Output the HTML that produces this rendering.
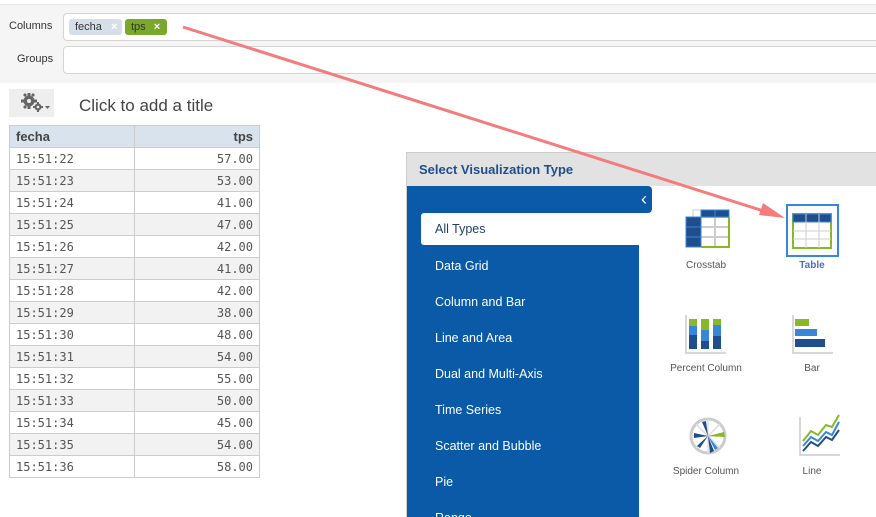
<!DOCTYPE html>
<html style="width:876px;height:517px;overflow:hidden"><head><meta charset="utf-8"><style>
*{box-sizing:border-box;margin:0;padding:0}
html{overflow:hidden}
body{width:876px;height:517px;overflow:hidden;background:#fff;font-family:"Liberation Sans",sans-serif;position:relative;font-size:12px;color:#333}
.top{position:absolute;left:0;top:0;width:876px;height:5px;background:#fff;border-bottom:1px solid #e4e4e4}
.filt{position:absolute;left:0;top:5px;width:876px;height:78px;background:#f5f5f5}
.lbl{position:absolute;font-size:11px;color:#333}
.inp{position:absolute;left:63px;width:813px;height:28px;background:#fff;border:1px solid #d4d4d4;border-right:none;border-radius:4px 0 0 4px}
.chip{position:absolute;top:5px;height:16px;border-radius:3px;font-size:11px;line-height:16px;padding-left:6px;color:#333}
.gear{position:absolute;left:9px;top:89px;width:45px;height:28px;background:#eee}
.title{position:absolute;left:79px;top:96px;font-size:17px;color:#444}
table{position:absolute;left:9px;top:125px;width:251px;border-collapse:collapse;font-size:12.5px}
td,th{border:1px solid #ccc;height:22px;padding:0 6px;font-family:"DejaVu Sans Mono","Liberation Mono",monospace;font-size:12px;color:#555}
th{background:#d9e3ee;font-family:"Liberation Sans",sans-serif;font-weight:bold;font-size:13px;color:#444;text-align:left}
td:nth-child(2),th:nth-child(2){text-align:right;width:125px}
tr:nth-child(odd) td{background:#f2f2f2}
.panel{position:absolute;left:406px;top:152px;width:470px;height:365px;border:1px solid #ccc;border-bottom:none;border-right:none;background:#fff;overflow:hidden}
.ph{height:33px;background:#e2e2e2;color:#1f4e8c;font-weight:bold;font-size:13px;padding:9px 12px}
.side{position:absolute;left:0;top:33px;width:232px;height:340px;background:#0a5aa8}
.tab{position:absolute;left:0;top:33px;width:245px;height:27px;background:#0a5aa8;border-radius:0 4px 4px 0;color:#fff;text-align:right;padding-right:5px;font-size:18px;line-height:27px}
.item{position:absolute;left:28px;color:#fff;font-size:12.5px}
.sel{position:absolute;left:14px;top:60px;width:218px;height:32px;background:#fff;border-radius:3px 0 0 3px;color:#1f3f6e;padding:9px 14px;font-size:12.5px}
.ic{position:absolute;font-size:10px;color:#555;text-align:center;width:100px}
</style></head><body>
<div class="top"></div>
<div class="filt">
<div class="lbl" style="left:9px;top:15px">Columns</div>
<div class="lbl" style="left:17px;top:48px">Groups</div>
<div class="inp" style="top:8px">
<div class="chip" style="left:5px;width:53px;background:#d6dfe9">fecha <span style="color:#fff;font-weight:bold;margin-left:6px">×</span></div>
<div class="chip" style="left:61px;width:42px;background:#7aa82c">tps <span style="color:#fff;font-weight:bold;margin-left:5px">×</span></div>
</div>
<div class="inp" style="top:41px"></div>
</div>
<div class="gear"><svg width="45" height="28">
<g fill="#666"><circle cx="20" cy="12" r="5.5"/><circle cx="29" cy="18" r="3.5"/>
<path d="M18.5 4h3v3h-3zM18.5 17h3v3h-3zM12 10.5h3v3h-3zM25 10.5h3v3h-3zM14 6l2-2 2 2-2 2zM22 6l2-2 2 2-2 2zM14 18l2-2 2 2-2 2z"/>
<path d="M28 13h2v2h-2zM28 21h2v2h-2zM24 17h2v2h-2zM32 17h2v2h-2z"/></g>
<circle cx="20" cy="12" r="2" fill="#eee"/><circle cx="29" cy="18" r="1.3" fill="#eee"/><path d="M36 17h5l-2.5 3z" fill="#666"/></svg></div>
<div class="title">Click to add a title</div>
<table>
<tr><th>fecha</th><th>tps</th></tr>
<tr><td>15:51:22</td><td>57.00</td></tr>
<tr><td>15:51:23</td><td>53.00</td></tr>
<tr><td>15:51:24</td><td>41.00</td></tr>
<tr><td>15:51:25</td><td>47.00</td></tr>
<tr><td>15:51:26</td><td>42.00</td></tr>
<tr><td>15:51:27</td><td>41.00</td></tr>
<tr><td>15:51:28</td><td>42.00</td></tr>
<tr><td>15:51:29</td><td>38.00</td></tr>
<tr><td>15:51:30</td><td>48.00</td></tr>
<tr><td>15:51:31</td><td>54.00</td></tr>
<tr><td>15:51:32</td><td>55.00</td></tr>
<tr><td>15:51:33</td><td>50.00</td></tr>
<tr><td>15:51:34</td><td>45.00</td></tr>
<tr><td>15:51:35</td><td>54.00</td></tr>
<tr><td>15:51:36</td><td>58.00</td></tr>
</table>
<div class="panel">
<div class="ph">Select Visualization Type</div>
<div class="side"></div>
<div class="tab">‹</div>
<div class="sel">All Types</div>
<div class="item" style="top:106px">Data Grid</div>
<div class="item" style="top:142px">Column and Bar</div>
<div class="item" style="top:178px">Line and Area</div>
<div class="item" style="top:214px">Dual and Multi-Axis</div>
<div class="item" style="top:250px">Time Series</div>
<div class="item" style="top:286px">Scatter and Bubble</div>
<div class="item" style="top:322px">Pie</div>
<div class="item" style="top:358px">Range</div>
<svg style="position:absolute;left:270px;top:50px" width="200" height="300">
<g>
<rect x="16" y="7" width="36" height="37" fill="#fff" stroke="#ccc"/>
<path d="M24 14h28M24 24h28M24 34h28M38 7v37" stroke="#ccc" stroke-width="2"/>
<rect x="24" y="7" width="28" height="7" fill="#1f4e8c" stroke="#3a86d6"/>
<path d="M38 7v7" stroke="#3a86d6"/>
<rect x="9" y="14" width="15" height="30" fill="#1f4e8c" stroke="#3a86d6"/>
<path d="M9 24h15M9 34h15" stroke="#3a86d6"/>
<path d="M24 44h28V14" fill="none" stroke="#86b827" stroke-width="2"/>
<rect x="110" y="2" width="51" height="51" fill="#fafafa" stroke="#3a86d6" stroke-width="2"/>
<rect x="116" y="11" width="38" height="34" fill="#fff" stroke="#86b827" stroke-width="2"/>
<rect x="116" y="11" width="38" height="8" fill="#1f4e8c" stroke="#3a86d6"/>
<path d="M129 11v34M142 11v34M116 28h38M116 36h38" stroke="#ccc"/>
<path d="M9 112v38h40" fill="none" stroke="#ccc" stroke-width="1.5"/>
<rect x="12" y="116" width="8" height="30" fill="#1f4e8c"/><rect x="12" y="116" width="8" height="16" fill="#3a86d6"/><rect x="12" y="116" width="8" height="7" fill="#86b827"/>
<rect x="24" y="116" width="8" height="30" fill="#1f4e8c"/><rect x="24" y="116" width="8" height="22" fill="#3a86d6"/><rect x="24" y="116" width="8" height="11" fill="#86b827"/>
<rect x="36" y="116" width="8" height="30" fill="#1f4e8c"/><rect x="36" y="116" width="8" height="17" fill="#3a86d6"/><rect x="36" y="116" width="8" height="6" fill="#86b827"/>
<path d="M116 112v38h40" fill="none" stroke="#ccc" stroke-width="1.5"/>
<rect x="118" y="116" width="14" height="7" fill="#86b827"/><rect x="118" y="126" width="22" height="7" fill="#3a86d6"/><rect x="118" y="136" width="30" height="8" fill="#1f4e8c"/>
<circle cx="31" cy="233" r="17" fill="none" stroke="#ccc" stroke-width="3"/>
<path d="M14 233h34M31 216v34M19 221l24 24M43 221l-24 24" stroke="#ddd" stroke-width="1.5"/>
<path d="M31 233l-14 2 0-5zM31 233l-6-14 4-1zM31 233l6 15-4 2zM31 233l-8 12-3-2z" fill="#1f4e8c"/>
<path d="M31 233l10 12-3 2z" fill="#3a86d6"/><path d="M31 233l16-4 1 5z" fill="#86b827"/>
<path d="M123 214v38h40" fill="none" stroke="#ccc" stroke-width="1.5"/>
<path d="M126 238l8-10 7 4 8-10 6 2 7-12" fill="none" stroke="#86b827" stroke-width="2"/>
<path d="M126 243l8-9 7 4 8-9 6 3 7-13" fill="none" stroke="#3a86d6" stroke-width="2"/>
<path d="M126 248l8-9 7 4 8-9 6 3 7-10" fill="none" stroke="#1f4e8c" stroke-width="2"/>
</g></svg>
<div class="ic" style="left:249px;top:107px">Crosstab</div>
<div class="ic" style="left:355px;top:107px;color:#4a6fc7;font-weight:bold">Table</div>
<div class="ic" style="left:249px;top:210px">Percent Column</div>
<div class="ic" style="left:355px;top:210px">Bar</div>
<div class="ic" style="left:249px;top:313px">Spider Column</div>
<div class="ic" style="left:355px;top:313px">Line</div>
</div>
<svg style="position:absolute;left:0;top:0" width="876" height="517"><path d="M183 27L770 213" stroke="#f47c7c" stroke-width="3"/><path d="M785 218l-22 -15 -4 12z" fill="#f47c7c"/></svg>
</body></html>
